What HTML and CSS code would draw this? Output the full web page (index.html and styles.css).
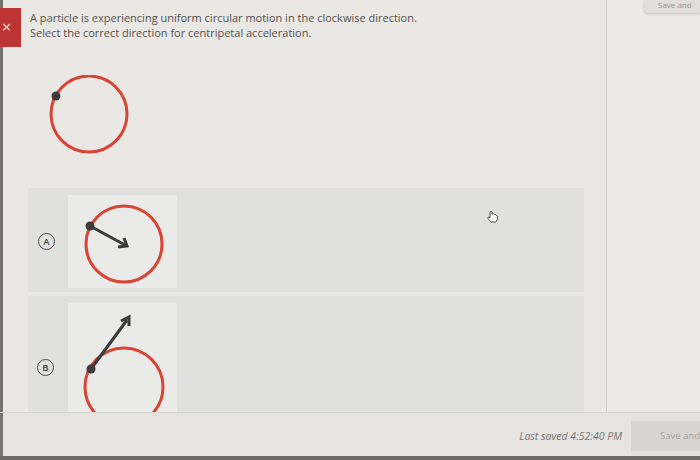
FILE: index.html
```html
<!DOCTYPE html>
<html>
<head>
<meta charset="utf-8">
<link rel="stylesheet" href="styles.css">
</head>
<body>
<div class="screen">
  <div class="top">
    <div class="edge"></div>
    <div class="main">
      <div class="badge">&times;</div>
      <div class="question">
        <p>A particle is experiencing uniform circular motion in the clockwise direction.</p>
        <p>Select the correct direction for centripetal acceleration.</p>
      </div>
      <svg class="given" width="100" height="90" viewBox="0 0 100 90">
        <circle cx="44" cy="39" r="38" fill="none" stroke="#d94534" stroke-width="3"/>
        <circle cx="11" cy="21" r="4.5" fill="#3d3b3b"/>
      </svg>
      <div class="options">
        <div class="option opt-a">
          <span class="letter">A</span>
          <div class="pic">
            <svg width="109" height="93" viewBox="0 0 109 93">
              <circle cx="56" cy="49" r="38" fill="none" stroke="#d94534" stroke-width="3"/>
              <line x1="22" y1="31" x2="57" y2="50" stroke="#3d3b3b" stroke-width="3"/>
              <polyline points="50,52 59,51 56,43" fill="none" stroke="#3d3b3b" stroke-width="3" stroke-linejoin="miter"/>
              <circle cx="22" cy="31" r="4.5" fill="#3d3b3b"/>
            </svg>
          </div>
          <svg class="cursor" width="14" height="14" viewBox="0 0 14 14">
            <path d="M4 2 L4 8 L3 7 Q1.5 7 2 8.5 L5 12 L10 12 L11.5 9 L11.5 6 Q11 5 10 5.5 L10 5 Q9.5 4 8.5 4.5 Q8 3.5 7 4 L6 4 L6 2 Q5 0.8 4 2 Z" fill="#fafafa" stroke="#555" stroke-width="1"/>
          </svg>
        </div>
        <div class="option opt-b">
          <span class="letter">B</span>
          <div class="pic">
            <svg width="109" height="114" viewBox="0 0 109 114">
              <circle cx="56" cy="84" r="39" fill="none" stroke="#d94534" stroke-width="3"/>
              <line x1="23" y1="66" x2="59" y2="17" stroke="#3d3b3b" stroke-width="3"/>
              <polyline points="53,18 61,14 61,23" fill="none" stroke="#3d3b3b" stroke-width="3"/>
              <circle cx="23" cy="66" r="4.5" fill="#3d3b3b"/>
            </svg>
          </div>
        </div>
      </div>
    </div>
    <div class="side">
      <div class="topbtn">Save and</div>
    </div>
  </div>
  <div class="footer">
    <div class="edge"></div>
    <div class="foot-inner">
      <span class="saved">Last saved 4:52:40 PM</span>
      <div class="savebtn">Save and</div>
    </div>
  </div>
  <div class="bottom-edge"></div>
</div>
</body>
</html>
```

FILE: styles.css
```css
html, body {
  margin: 0;
  padding: 0;
}
body {
  width: 700px;
  height: 460px;
  overflow: hidden;
  background: #e8e6e3;
  font-family: "Open Sans", "DejaVu Sans", sans-serif;
}
.screen {
  display: flex;
  flex-direction: column;
  width: 700px;
  height: 460px;
}
.top {
  display: flex;
  height: 412px;
  flex: none;
  overflow: hidden;
}
.edge {
  width: 3px;
  flex: none;
  background: #767272;
}
.main {
  position: relative;
  width: 603px;
  flex: none;
  background: #eae8e5;
  border-right: 1px solid #d2d0cd;
  display: flex;
  flex-direction: column;
}
.main > * {
  flex-shrink: 0;
}
.badge {
  position: absolute;
  left: -3px;
  top: 8px;
  width: 21px;
  height: 39px;
  background: #bd3434;
  color: #f3dcdc;
  font-size: 17px;
  line-height: 37px;
  text-align: center;
  box-sizing: border-box;
  padding-right: 8px;
}
.question {
  padding: 10px 0 0 27px;
  color: #55524f;
  font-size: 11px;
  line-height: 15px;
}
.question p {
  margin: 0;
}
.given {
  display: block;
  margin: 35px 0 0 42px;
}
.options {
  margin: 23px 0 0 25px;
  width: 556px;
  display: flex;
  flex-direction: column;
  gap: 4px;
}
.option {
  position: relative;
  background: #e0e0df;
  display: flex;
  align-items: flex-start;
  flex-shrink: 0;
}
.opt-a {
  height: 104px;
  padding-top: 7px;
  box-sizing: border-box;
}
.opt-b {
  height: 130px;
  padding-top: 7px;
  box-sizing: border-box;
}
.letter {
  width: 15px;
  height: 15px;
  border: 1px solid #4a4848;
  border-radius: 50%;
  font-size: 9.5px;
  font-weight: 600;
  line-height: 15px;
  text-align: center;
  color: #4a4848;
  margin: 38px 0 0 10px;
  flex: none;
}
.opt-b .letter {
  margin-top: 56px;
  margin-left: 9px;
}
.pic {
  margin-left: 13px;
  width: 109px;
  background: #eaeae8;
  flex: none;
}
.opt-b .pic {
  margin-left: 14px;
}
.pic svg {
  display: block;
}
.cursor {
  position: absolute;
  left: 458px;
  top: 22px;
}
.side {
  position: relative;
  flex: 1;
  background: #ecebe8;
}
.topbtn {
  position: absolute;
  right: 0;
  top: 0;
  width: 56px;
  height: 13px;
  border-radius: 0 0 0 4px;
  background: #e0dedb;
  box-shadow: 0 1px 3px rgba(0,0,0,0.18);
  color: #9a9896;
  font-size: 8px;
  line-height: 10px;
  text-indent: 14px;
  white-space: nowrap;
  overflow: hidden;
}
.footer {
  display: flex;
  height: 43px;
  flex: none;
  border-top: 1px solid #d6d4d1;
  background: #e6e4e1;
}
.foot-inner {
  flex: 1;
  display: flex;
  align-items: center;
  justify-content: flex-end;
  gap: 9px;
  overflow: hidden;
}
.saved {
  font-style: italic;
  color: #77746f;
  font-size: 10.5px;
  margin-top: 3px;
}
.savebtn {
  width: 69px;
  height: 30px;
  flex: none;
  background: #d8d6d3;
  color: #a3a19e;
  font-size: 9.5px;
  line-height: 30px;
  text-indent: 29px;
  white-space: nowrap;
  overflow: hidden;
  margin-top: 2px;
}
.bottom-edge {
  height: 4px;
  flex: none;
  background: #6c6868;
}
```
